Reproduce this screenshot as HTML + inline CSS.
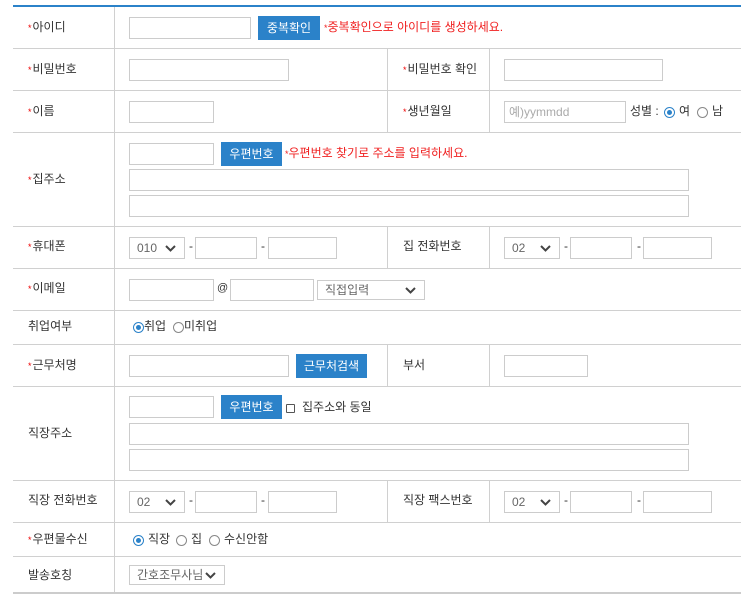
<!DOCTYPE html>
<html><head><meta charset="utf-8"><style>
*{box-sizing:border-box;margin:0;padding:0}
body{width:755px;height:603px;background:#fff;position:relative;font-family:"Liberation Sans","Noto Sans CJK KR",sans-serif;font-size:12px;color:#333;overflow:hidden}
.a{position:absolute}
.h{position:absolute;left:13px;width:728px;height:1px;background:#d0d0d0}
.v{position:absolute;width:1px;background:#d0d0d0}
.i{position:absolute;border:1px solid #ccc;background:#fff;height:22px}
.b{position:absolute;background:#2b82c9;color:#fff;text-align:center;line-height:24px;height:24px;font-size:12px}
.l{position:absolute;left:28px;line-height:16px;white-space:nowrap}
.l2{position:absolute;left:403px;line-height:16px;white-space:nowrap}
.s{color:#e00;font-size:9px;margin-right:1px}
.t{position:absolute;line-height:16px;white-space:nowrap}
.red{color:#f02020}
.sel{position:absolute;border:1px solid #ccc;height:22px;background:#fff;color:#666;padding-left:7px;line-height:20px}
.sel svg{position:absolute;right:8px;top:7px}
.r{position:absolute;width:11px;height:11px;border:1px solid #888;border-radius:50%;background:#fff}
.r.on{border-color:#2b82c9}
.r.on::after{content:"";position:absolute;left:2px;top:2px;width:5px;height:5px;border-radius:50%;background:#2b82c9}
</style></head><body>
<div class="a" style="left:13px;top:5px;width:728px;height:2px;background:#2b82c9"></div>
<div class="h" style="top:48px"></div><div class="h" style="top:90px"></div><div class="h" style="top:132px"></div>
<div class="h" style="top:226px"></div><div class="h" style="top:268px"></div><div class="h" style="top:310px"></div>
<div class="h" style="top:344px"></div><div class="h" style="top:386px"></div><div class="h" style="top:480px"></div>
<div class="h" style="top:522px"></div><div class="h" style="top:556px"></div>
<div class="a" style="left:13px;top:592px;width:728px;height:2px;background:#ccc"></div>
<div class="v" style="left:114px;top:7px;height:585px"></div>
<div class="v" style="left:387px;top:48px;height:84px"></div><div class="v" style="left:489px;top:48px;height:84px"></div>
<div class="v" style="left:387px;top:226px;height:42px"></div><div class="v" style="left:489px;top:226px;height:42px"></div>
<div class="v" style="left:387px;top:344px;height:42px"></div><div class="v" style="left:489px;top:344px;height:42px"></div>
<div class="v" style="left:387px;top:480px;height:42px"></div><div class="v" style="left:489px;top:480px;height:42px"></div>

<!-- row1 -->
<div class="l" style="top:19px"><span class="s">*</span>아이디</div>
<div class="i" style="left:129px;top:17px;width:122px"></div>
<div class="b" style="left:258px;top:16px;width:62px">중복확인</div>
<div class="t red" style="left:324px;top:19px"><span style="font-size:9px">*</span>중복확인으로 아이디를 생성하세요.</div>
<!-- row2 -->
<div class="l" style="top:61px"><span class="s">*</span>비밀번호</div>
<div class="i" style="left:129px;top:59px;width:160px"></div>
<div class="l2" style="top:61px"><span class="s">*</span>비밀번호 확인</div>
<div class="i" style="left:504px;top:59px;width:159px"></div>
<!-- row3 -->
<div class="l" style="top:103px"><span class="s">*</span>이름</div>
<div class="i" style="left:129px;top:101px;width:85px"></div>
<div class="l2" style="top:103px"><span class="s">*</span>생년월일</div>
<div class="i" style="left:504px;top:101px;width:122px;color:#aaa;padding-left:4px;line-height:20px">예)yymmdd</div>
<div class="t" style="left:630px;top:103px">성별 :</div>
<div class="r on" style="left:664px;top:107px"></div><div class="t" style="left:679px;top:103px">여</div>
<div class="r" style="left:697px;top:107px"></div><div class="t" style="left:712px;top:103px">남</div>
<!-- 집주소 -->
<div class="l" style="top:171px"><span class="s">*</span>집주소</div>
<div class="i" style="left:129px;top:143px;width:85px"></div>
<div class="b" style="left:221px;top:142px;width:61px">우편번호</div>
<div class="t red" style="left:285px;top:145px"><span style="font-size:9px">*</span>우편번호 찾기로 주소를 입력하세요.</div>
<div class="i" style="left:129px;top:169px;width:560px"></div>
<div class="i" style="left:129px;top:195px;width:560px"></div>
<!-- 휴대폰 -->
<div class="l" style="top:238px"><span class="s">*</span>휴대폰</div>
<div class="sel" style="left:129px;top:237px;width:56px">010<svg width="11" height="7"><path d="M1 1l4.5 4.5L10 1" stroke="#444" stroke-width="2" fill="none"/></svg></div>
<div class="t" style="left:189px;top:238px">-</div>
<div class="i" style="left:195px;top:237px;width:62px"></div>
<div class="t" style="left:261px;top:238px">-</div>
<div class="i" style="left:268px;top:237px;width:69px"></div>
<div class="l2" style="top:238px">집 전화번호</div>
<div class="sel" style="left:504px;top:237px;width:56px">02<svg width="11" height="7"><path d="M1 1l4.5 4.5L10 1" stroke="#444" stroke-width="2" fill="none"/></svg></div>
<div class="t" style="left:564px;top:238px">-</div>
<div class="i" style="left:570px;top:237px;width:62px"></div>
<div class="t" style="left:637px;top:238px">-</div>
<div class="i" style="left:643px;top:237px;width:69px"></div>
<!-- 이메일 -->
<div class="l" style="top:280px"><span class="s">*</span>이메일</div>
<div class="i" style="left:129px;top:279px;width:85px"></div>
<div class="t" style="left:217px;top:280px;font-size:11px">@</div>
<div class="i" style="left:230px;top:279px;width:84px"></div>
<div class="sel" style="left:317px;top:280px;width:108px;height:20px;line-height:18px">직접입력<svg width="11" height="7" style="top:6px"><path d="M1 1l4.5 4.5L10 1" stroke="#444" stroke-width="2" fill="none"/></svg></div>
<!-- 취업여부 -->
<div class="l" style="top:318px">취업여부</div>
<div class="r on" style="left:133px;top:322px"></div><div class="t" style="left:144px;top:318px">취업</div>
<div class="r" style="left:173px;top:322px"></div><div class="t" style="left:184px;top:318px">미취업</div>
<!-- 근무처명 -->
<div class="l" style="top:357px"><span class="s">*</span>근무처명</div>
<div class="i" style="left:129px;top:355px;width:160px"></div>
<div class="b" style="left:296px;top:354px;width:71px">근무처검색</div>
<div class="l2" style="top:357px">부서</div>
<div class="i" style="left:504px;top:355px;width:84px"></div>
<!-- 직장주소 -->
<div class="l" style="top:425px">직장주소</div>
<div class="i" style="left:129px;top:396px;width:85px"></div>
<div class="b" style="left:221px;top:395px;width:61px">우편번호</div>
<div class="a" style="left:286px;top:404px;width:9px;height:9px;border:1px solid #555;border-radius:1px"></div>
<div class="t" style="left:302px;top:399px">집주소와 동일</div>
<div class="i" style="left:129px;top:423px;width:560px"></div>
<div class="i" style="left:129px;top:449px;width:560px"></div>
<!-- 직장 전화 -->
<div class="l" style="top:492px">직장 전화번호</div>
<div class="sel" style="left:129px;top:491px;width:56px">02<svg width="11" height="7"><path d="M1 1l4.5 4.5L10 1" stroke="#444" stroke-width="2" fill="none"/></svg></div>
<div class="t" style="left:189px;top:492px">-</div>
<div class="i" style="left:195px;top:491px;width:62px"></div>
<div class="t" style="left:261px;top:492px">-</div>
<div class="i" style="left:268px;top:491px;width:69px"></div>
<div class="l2" style="top:492px">직장 팩스번호</div>
<div class="sel" style="left:504px;top:491px;width:56px">02<svg width="11" height="7"><path d="M1 1l4.5 4.5L10 1" stroke="#444" stroke-width="2" fill="none"/></svg></div>
<div class="t" style="left:564px;top:492px">-</div>
<div class="i" style="left:570px;top:491px;width:62px"></div>
<div class="t" style="left:637px;top:492px">-</div>
<div class="i" style="left:643px;top:491px;width:69px"></div>
<!-- 우편물수신 -->
<div class="l" style="top:531px"><span class="s">*</span>우편물수신</div>
<div class="r on" style="left:133px;top:535px"></div><div class="t" style="left:148px;top:531px">직장</div>
<div class="r" style="left:176px;top:535px"></div><div class="t" style="left:191px;top:531px">집</div>
<div class="r" style="left:209px;top:535px"></div><div class="t" style="left:224px;top:531px">수신안함</div>
<!-- 발송호칭 -->
<div class="l" style="top:567px">발송호칭</div>
<div class="sel" style="left:129px;top:565px;width:96px;height:20px;line-height:18px">간호조무사님<svg width="11" height="7" style="top:6px"><path d="M1 1l4.5 4.5L10 1" stroke="#444" stroke-width="2" fill="none"/></svg></div>
</body></html>
